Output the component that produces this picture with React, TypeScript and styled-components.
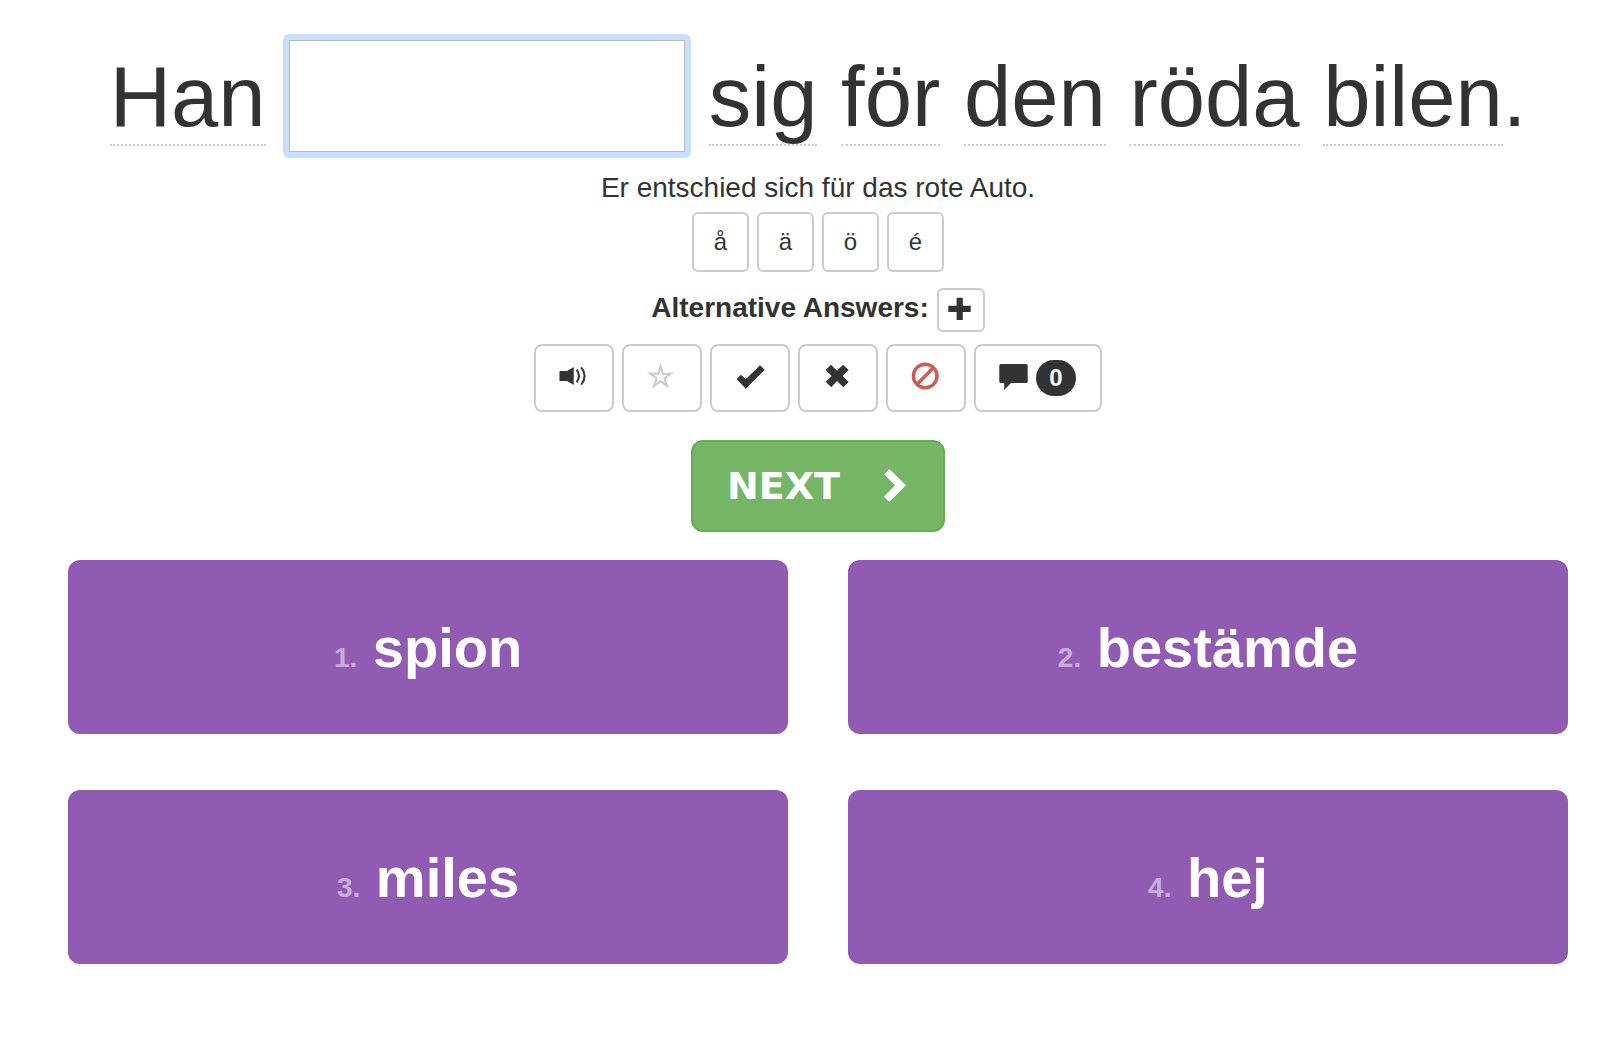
import React from "react";
import styled, { createGlobalStyle } from "styled-components";

const GlobalStyle = createGlobalStyle`
  *, *::before, *::after { box-sizing: border-box; }
  body {
    margin: 0;
    background: #fff;
    color: #333;
    font-family: "Helvetica Neue", "Liberation Sans", Arial, sans-serif;
    font-size: 28px;
    line-height: 40px;
  }
  button, input { font: inherit; color: inherit; margin: 0; }
`;

const Page = styled.main`
  display: flex;
  flex-direction: column;
  align-items: center;
  padding: 40px 40px 86px 68px;
`;

const Sentence = styled.p`
  margin: 0;
  font-size: 85px;
  line-height: 106px;
  text-align: center;
`;

const Word = styled.span`
  border-bottom: 2px dotted #ccc;
`;

const BlankRing = styled.label`
  display: inline-block;
  margin: -6px;
  padding: 6px;
  border-radius: 6px;
  background: #c5dffd;
  line-height: 0;
`;

const Blank = styled.input`
  width: 396px;
  max-width: 100%;
  height: 112px;
  padding: 2px 8px 0;
  border: 1px solid #bbb;
  border-radius: 0;
  background: #fff;
  outline: none;
  text-align: center;
`;

const Translation = styled.p`
  margin: 16px 0 4px;
  text-align: center;
`;

const Row = styled.div`
  display: flex;
  flex-wrap: wrap;
  justify-content: center;
  gap: 8px;
`;

const AlternativeRow = styled(Row)`
  margin: 16px 0 12px;
`;

const AlternativeLabel = styled.strong`
  font-weight: 700;
`;

const OutlineButton = styled.button`
  display: inline-flex;
  align-items: center;
  justify-content: center;
  border: 2px solid #ccc;
  border-radius: 6px;
  background: #fff;
  cursor: pointer;
`;

const KeyButton = styled(OutlineButton)`
  width: 57px;
  height: 60px;
  padding: 0;
  font-size: 24px;
`;

const AddButton = styled(OutlineButton)`
  padding: 6px 8px;
`;

const ToolButton = styled(OutlineButton)<{ $tone?: string }>`
  gap: 8px;
  height: 68px;
  padding: 0 24px;
  border-radius: 8px;
  color: ${(p) => p.$tone ?? "#333"};
`;

const Badge = styled.span`
  padding: 0 13px;
  border-radius: 20px;
  background: #333;
  color: #fff;
  font-size: 24px;
  font-weight: 700;
  line-height: 36px;
`;

const Glyph = styled.svg`
  display: block;
  flex: none;
  overflow: visible;
  fill: currentColor;
`;

const NextButton = styled.button`
  display: inline-flex;
  align-items: center;
  gap: 44px;
  height: 92px;
  margin: 28px 0;
  padding: 0 37px 0 34px;
  border: 2px solid #68ac59;
  border-radius: 12px;
  background: #75b666;
  color: #fff;
  font-family: "DejaVu Sans", Verdana, sans-serif;
  font-size: 38px;
  font-weight: 700;
  cursor: pointer;
`;

const Choices = styled.section`
  display: grid;
  grid-template-columns: repeat(2, 1fr);
  gap: 56px 60px;
  width: 100%;
`;

const Choice = styled.button`
  padding: 48px 16px 46px;
  border: 0;
  border-radius: 12px;
  background: #915bb4;
  color: #fff;
  font-size: 56px;
  font-weight: 700;
  line-height: 80px;
  cursor: pointer;
`;

const ChoiceNumber = styled.span`
  font-size: 28px;
  line-height: 1;
  opacity: 0.5;
`;

const starPoints = (outer: number, inner: number) =>
  Array.from({ length: 10 }, (_, i) => {
    const radius = i % 2 ? inner : outer;
    const angle = (Math.PI / 5) * i - Math.PI / 2;
    return `${12.5 + radius * Math.cos(angle)} ${13 + radius * Math.sin(angle)}`;
  }).join("L");

const Icon = ({ children }: { children: React.ReactNode }) => (
  <Glyph width="28" height="28" viewBox="0 0 28 28" aria-hidden="true">
    {children}
  </Glyph>
);

const VolumeIcon = () => (
  <Icon>
    <path d="M-.5 7.6Q-.5 7 .2 7H7L13.7 3V21L7 17H.2Q-.5 17-.5 16.4Z" />
    <path
      d="M16.7 5.6Q21.3 12 16.7 18.4M21.2 3.4Q28 12 21.2 20.6"
      fill="none"
      stroke="currentColor"
      strokeWidth="2"
    />
  </Icon>
);

const StarIcon = () => (
  <Icon>
    <path fillRule="evenodd" d={`M${starPoints(14.2, 5.4)}ZM${starPoints(7.2, 2.8)}Z`} />
  </Icon>
);

const CheckIcon = () => (
  <Icon>
    <path d="M.7 15L5 10.7L9.7 15.3L24 1.3L28.7 5.7L9.7 24.7Z" />
  </Icon>
);

const CrossIcon = () => (
  <Icon>
    <path d="M1.7 6L7 .7L13 6.7L19 .7L24.7 6L18.7 12L24.7 18L19.3 23.3L13 17L7.3 23.3L1.7 17.7L7.7 12Z" />
  </Icon>
);

const BanIcon = () => (
  <Icon>
    <g fill="none" stroke="currentColor" strokeWidth="3.4">
      <circle cx="13.2" cy="12" r="11.8" />
      <path d="M5 20.2L21.4 3.8" />
    </g>
  </Icon>
);

const CommentIcon = () => (
  <Icon>
    <path d="M.8 0H26.2Q27.7 0 27.7 1.5V17.5Q27.7 19 26.2 19H11L4.2 26V19H.8Q-.7 19-.7 17.5V1.5Q-.7 0 .8 0Z" />
  </Icon>
);

const PlusIcon = () => (
  <Icon>
    <path d="M9.6 1.7H15.8V9.8H23.7V16H15.8V24H9.6V16H1.3V9.8H9.6Z" />
  </Icon>
);

const ChevronIcon = () => (
  <Glyph width="22" height="34" viewBox="0 0 22 34" aria-hidden="true">
    <path d="M0 5.3L5.3 0L22 16.3L5.3 33L0 27.7L11 16.3Z" />
  </Glyph>
);

const trailingWords = ["sig", "för", "den", "röda", "bilen"];
const specialKeys = ["å", "ä", "ö", "é"];
const choices = ["spion", "bestämde", "miles", "hej"];

export default function App() {
  return (
    <>
      <GlobalStyle />
      <Page>
        <Sentence lang="sv">
          <Word>Han</Word>{" "}
          <BlankRing>
            <Blank type="text" aria-label="Missing word" autoComplete="off" />
          </BlankRing>
          {trailingWords.map((word) => (
            <React.Fragment key={word}>
              {" "}
              <Word>{word}</Word>
            </React.Fragment>
          ))}
          .
        </Sentence>
        <Translation lang="de">Er entschied sich für das rote Auto.</Translation>
        <Row>
          {specialKeys.map((letter) => (
            <KeyButton type="button" key={letter}>
              {letter}
            </KeyButton>
          ))}
        </Row>
        <AlternativeRow>
          <AlternativeLabel>Alternative Answers:</AlternativeLabel>
          <AddButton type="button" aria-label="Add alternative answer">
            <PlusIcon />
          </AddButton>
        </AlternativeRow>
        <Row>
          <ToolButton type="button" aria-label="Play audio">
            <VolumeIcon />
          </ToolButton>
          <ToolButton type="button" aria-label="Favorite" $tone="#ccc">
            <StarIcon />
          </ToolButton>
          <ToolButton type="button" aria-label="Mark as known">
            <CheckIcon />
          </ToolButton>
          <ToolButton type="button" aria-label="Reset">
            <CrossIcon />
          </ToolButton>
          <ToolButton type="button" aria-label="Ignore" $tone="#cd5c54">
            <BanIcon />
          </ToolButton>
          <ToolButton type="button" aria-label="Comments: 0">
            <CommentIcon />
            <Badge>0</Badge>
          </ToolButton>
        </Row>
        <NextButton type="button">
          NEXT
          <ChevronIcon />
        </NextButton>
        <Choices aria-label="Choices">
          {choices.map((choice, index) => (
            <Choice type="button" key={choice}>
              <ChoiceNumber>{index + 1}.</ChoiceNumber> {choice}
            </Choice>
          ))}
        </Choices>
      </Page>
    </>
  );
}
